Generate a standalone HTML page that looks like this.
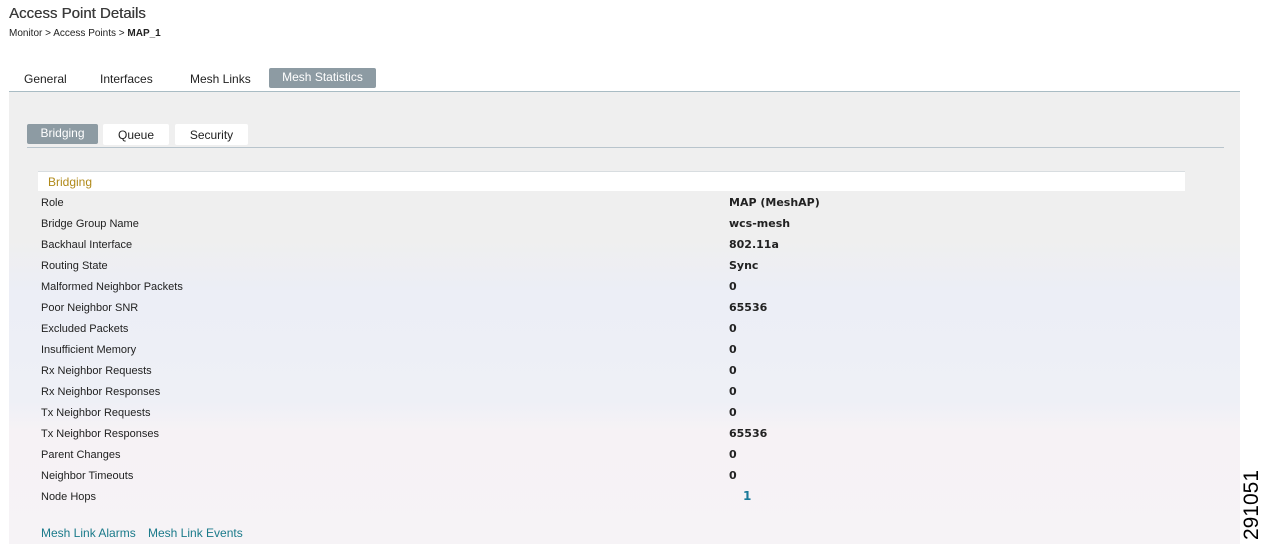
<!DOCTYPE html>
<html><head><style>
body{margin:0;width:1271px;height:544px;background:#fff;font-family:"Liberation Sans",Verdana,sans-serif;position:relative;overflow:hidden;color:#222}
.a{position:absolute;white-space:nowrap}
.panel{position:absolute;left:9px;top:91px;width:1231px;height:453px;background:linear-gradient(#efefef 0,#efefef 150px,#eceef6 200px,#eef0f6 310px,#f6f2f5 340px,#f6f3f6 453px)}
.row{position:absolute;left:41px;font-size:11px;color:#222}
.v{position:absolute;left:729px;font-weight:bold;color:#222;font-family:"DejaVu Sans",sans-serif;font-size:11px}
.tab{position:absolute;font-size:12px;color:#222}
</style></head><body>
<div class="a" style="left:9px;top:5px;font-size:15px;color:#3a3a3a;text-shadow:0.3px 0 0 #3a3a3a">Access Point Details</div>
<div class="a" style="left:9px;top:28px;font-size:10px;color:#222">Monitor &gt; Access Points &gt; <b>MAP_1</b></div>
<div class="tab" style="left:24px;top:72px">General</div>
<div class="tab" style="left:100px;top:72px">Interfaces</div>
<div class="tab" style="left:190px;top:72px">Mesh Links</div>
<div class="a" style="left:269px;top:68px;width:107px;height:20px;background:#8d9ba3;border-radius:2px;color:#fff;font-size:12px;text-align:center;line-height:19px">Mesh Statistics</div>
<div class="panel"></div>
<div class="a" style="left:9px;top:91px;width:1231px;height:1px;background:#a9bcc4"></div>
<div class="a" style="left:27px;top:124px;width:71px;height:20px;background:#8d9ba3;border-radius:2px;color:#fff;font-size:12px;text-align:center;line-height:19px">Bridging</div>
<div class="a" style="left:103px;top:124px;width:66px;height:21px;background:#fff;border-radius:2px;font-size:12px;text-align:center;line-height:22px">Queue</div>
<div class="a" style="left:175px;top:124px;width:73px;height:21px;background:#fff;border-radius:2px;font-size:12px;text-align:center;line-height:22px">Security</div>
<div class="a" style="left:27px;top:147px;width:1197px;height:1px;background:#b8c4cc"></div>
<div class="a" style="left:38px;top:171px;width:1147px;height:20px;background:#fff;border-top:1px solid #d8dde0;font-size:12px;color:#b08a1a;line-height:21px;padding-left:10px;box-sizing:border-box">Bridging</div>
<div class="row" style="top:197px">Role</div><div class="v" style="top:196px">MAP (MeshAP)</div>
<div class="row" style="top:218px">Bridge Group Name</div><div class="v" style="top:217px">wcs-mesh</div>
<div class="row" style="top:239px">Backhaul Interface</div><div class="v" style="top:238px">802.11a</div>
<div class="row" style="top:260px">Routing State</div><div class="v" style="top:259px">Sync</div>
<div class="row" style="top:281px">Malformed Neighbor Packets</div><div class="v" style="top:280px">0</div>
<div class="row" style="top:302px">Poor Neighbor SNR</div><div class="v" style="top:301px">65536</div>
<div class="row" style="top:323px">Excluded Packets</div><div class="v" style="top:322px">0</div>
<div class="row" style="top:344px">Insufficient Memory</div><div class="v" style="top:343px">0</div>
<div class="row" style="top:365px">Rx Neighbor Requests</div><div class="v" style="top:364px">0</div>
<div class="row" style="top:386px">Rx Neighbor Responses</div><div class="v" style="top:385px">0</div>
<div class="row" style="top:407px">Tx Neighbor Requests</div><div class="v" style="top:406px">0</div>
<div class="row" style="top:428px">Tx Neighbor Responses</div><div class="v" style="top:427px">65536</div>
<div class="row" style="top:449px">Parent Changes</div><div class="v" style="top:448px">0</div>
<div class="row" style="top:470px">Neighbor Timeouts</div><div class="v" style="top:469px">0</div>
<div class="row" style="top:491px">Node Hops</div><div class="v" style="top:489px;color:#1a7a9a;font-size:12px;left:743px">1</div>
<div class="a" style="left:41px;top:526px;font-size:12px;color:#1a7a8a">Mesh Link Alarms</div>
<div class="a" style="left:148px;top:526px;font-size:12px;color:#1a7a8a">Mesh Link Events</div>
<div class="a" style="left:1212px;top:493px;font-size:21px;color:#000;transform:rotate(-90deg);transform-origin:center;width:80px;text-align:center">291051</div>
</body></html>
